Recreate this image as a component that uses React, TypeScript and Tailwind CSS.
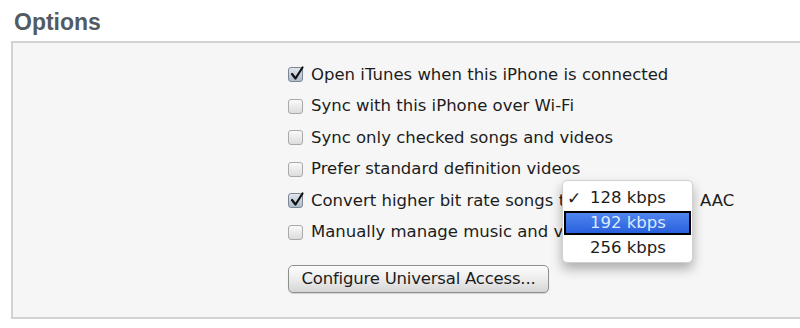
import React from "react";

const font = { fontFamily: '"DejaVu Sans", "Liberation Sans", sans-serif' };

function Box({ checked }: { checked?: boolean }) {
  return (
    <span
      className={
        "relative inline-block w-[15px] h-[15px] rounded-[3px] border shrink-0 " +
        (checked
          ? "border-[#7d8794] bg-gradient-to-b from-[#dfe6ef] to-[#aebccb]"
          : "border-[#a9a9a9] bg-gradient-to-b from-[#fafafa] to-[#dcdcdc]")
      }
    >
      {checked && (
        <svg viewBox="0 0 16 16" className="absolute left-[0px] top-[-3px] w-[16px] h-[17px]">
          <path d="M3 8.5 L6.5 13 L13.5 2" fill="none" stroke="#111" strokeWidth="2.2" strokeLinecap="round" strokeLinejoin="round" />
        </svg>
      )}
    </span>
  );
}

function Row({ checked, children }: { checked?: boolean; children: React.ReactNode }) {
  return (
    <div className="flex items-center gap-[8px] h-[31.5px] whitespace-nowrap">
      <Box checked={checked} />
      <span className="text-[16.5px] text-[#1c1c1c] leading-none flex items-center">{children}</span>
    </div>
  );
}

export default function App() {
  return (
    <div className="w-[800px] h-[328px] bg-white overflow-hidden relative" style={font}>
      <div className="pl-[14px] pt-[5px] h-[37px] text-[23px] font-bold text-[#525a63]" style={{ fontFamily: '"Liberation Sans", Arial, sans-serif' }}>
        Options
      </div>
      <div className="ml-[11px] mt-[4px] h-[278px] border-t-2 border-l-2 border-b-2 border-[#d3d3d3] bg-[#f6f6f6] pl-[275px] pt-[16px] relative">
        <Row checked>Open iTunes when this iPhone is connected</Row>
        <Row>Sync with this iPhone over Wi-Fi</Row>
        <Row>Sync only checked songs and videos</Row>
        <Row>Prefer standard definition videos</Row>
        <Row checked>
          <span className="inline-block w-[251px] overflow-hidden">Convert higher bit rate songs to</span>
          <span className="inline-block w-[131px] h-[22px] border-r border-[#9a9a9a]"></span>
          <span className="ml-[7px]">AAC</span>
        </Row>
        <Row>
          <span className="inline-block w-[251px] overflow-hidden">Manually manage music and videos</span>
        </Row>
        <div className="mt-[17px]">
          <button className="h-[28px] w-[261px] rounded-[5px] border border-[#8e8e8e] bg-gradient-to-b from-[#fdfdfd] via-[#ececec] to-[#d6d6d6] text-[16.5px] text-[#1c1c1c] shadow-[0_1px_1px_rgba(0,0,0,0.15)] tracking-[-0.2px] leading-none">
            Configure Universal Access...
          </button>
        </div>
        <div className="absolute left-[549px] top-[137px] w-[131px] h-[83px] bg-white rounded-[5px] border border-[#d0d0d0] shadow-[0_6px_12px_rgba(0,0,0,0.3)] pt-[4px] text-[16.5px] text-[#1c1c1c] leading-none">
          <div className="h-[26px] flex items-center">
            <span className="w-[27px] pl-[4px] text-[17px]">✓</span>
            <span>128 kbps</span>
          </div>
          <div className="h-[24px] mx-[1px] flex items-center bg-gradient-to-b from-[#4f86ee] to-[#2a5fdd] border-2 border-black text-[#dbe9ff]">
            <span className="pl-[24px]">192 kbps</span>
          </div>
          <div className="h-[26px] flex items-center">
            <span className="pl-[27px]">256 kbps</span>
          </div>
        </div>
      </div>
    </div>
  );
}
